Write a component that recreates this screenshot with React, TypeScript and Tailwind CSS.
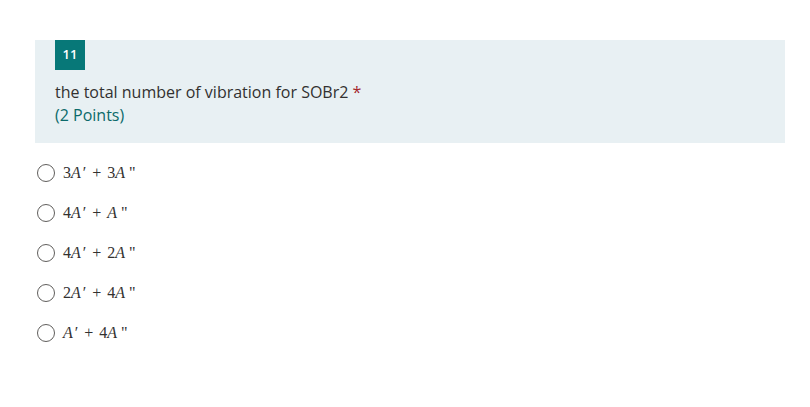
import React from "react";

const OPTIONS: { a: string; b: string }[] = [
    { a: "3", b: "3" },
    { a: "4", b: "" },
    { a: "4", b: "2" },
    { a: "2", b: "4" },
    { a: "", b: "4" },
];

function Option({ a, b }: { a: string; b: string }) {
    return (
        <label className="flex items-center h-10">
            <span className="w-[18px] h-[18px] rounded-full border border-[#605e5c] bg-white shrink-0" />
            <span className="ml-[8px] flex items-baseline text-[16px] text-[#323130] whitespace-pre" style={{ fontFamily: '"Liberation Serif", serif' }}>
                {a}
                <i>A</i>
                <span className="ml-[2px]">′</span>
                <span className="mx-[6px]">+</span>
                {b}
                <i>A</i>
                <span className="ml-[4px]">"</span>
            </span>
        </label>
    );
}

export default function App() {
    return (
        <div className="w-[810px] h-[407px] bg-white pt-10 pl-[35px]" style={{ fontFamily: '"Open Sans", sans-serif' }}>
            <div className="w-[750px] h-[103px] bg-[#e8f0f3] px-5">
                <div className="w-[30px] h-[30px] bg-[#077878] text-white text-[13px] font-semibold flex items-center justify-center">11</div>
                <div className="mt-[11px] text-[16px] leading-[23px] text-[#323130]">
                    the total number of vibration for SOBr2 <span className="text-[#a4262c]">*</span>
                </div>
                <div className="text-[16px] leading-[23px] text-[#0b6a6a]">(2 Points)</div>
            </div>
            <div className="mt-[10px] pl-[2px] flex flex-col">
                {OPTIONS.map((o, i) => (
                    <Option key={i} a={o.a} b={o.b} />
                ))}
            </div>
        </div>
    );
}
